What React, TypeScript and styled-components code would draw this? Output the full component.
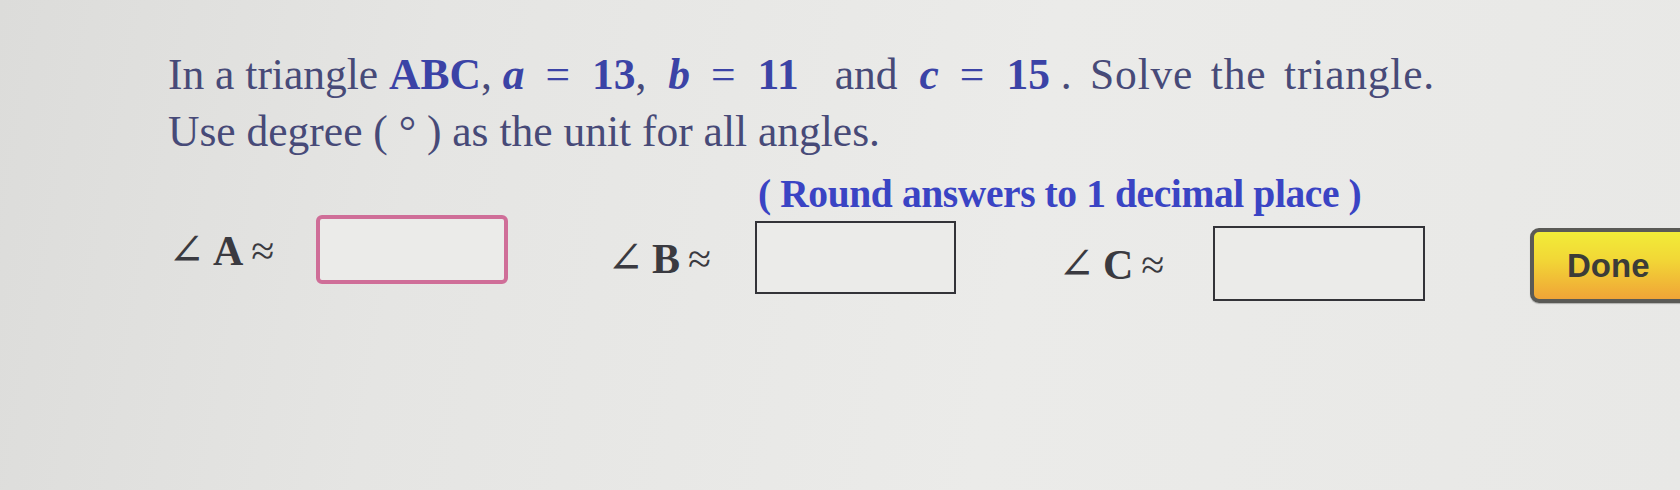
import React from "react";
import styled, { createGlobalStyle } from "styled-components";

const Global = createGlobalStyle`
  html, body { margin: 0; padding: 0; }
  body {
    width: 1680px;
    height: 490px;
    overflow: hidden;
    background: linear-gradient(100deg, #dcdcda 0%, #e5e5e3 25%, #ebebe9 60%, #e8e8e6 100%);
    font-family: "Liberation Serif", "Times New Roman", serif;
  }
`;

const Page = styled.main`
  padding: 46px 0 0 168px;
  display: flex;
  flex-direction: column;
`;

const Question = styled.p`
  margin: 0;
  font-size: 43.5px;
  line-height: 57px;
  color: #474a78;
  white-space: nowrap;
`;

const Math = styled.span<{ $italic?: boolean }>`
  font-weight: bold;
  color: #3b43a6;
  font-style: ${(p) => (p.$italic ? "italic" : "normal")};
`;

const Op = styled.span`
  color: #3b43a6;
  margin: 0 22px 0 21px;
`;

const Space = styled.span<{ $w: number }>`
  display: inline-block;
  width: ${(p) => p.$w}px;
`;

const Tail = styled.span`
  word-spacing: 6px;
  letter-spacing: 0.8px;
`;

const Hint = styled.p`
  margin: 14px 0 0 590px;
  font-size: 39.5px;
  line-height: 40px;
  font-weight: bold;
  color: #3a44c4;
  letter-spacing: -0.4px;
  white-space: nowrap;
`;

const AnswerRow = styled.div`
  display: flex;
  align-items: flex-start;
  margin-top: 1px;
`;

const Field = styled.div<{ $drop: number; $gap: number; $after: number }>`
  display: flex;
  align-items: center;
  gap: ${(p) => p.$gap}px;
  margin-right: ${(p) => p.$after}px;
  margin-top: ${(p) => p.$drop}px;
`;

const Label = styled.span<{ $w: number }>`
  font-size: 42px;
  color: #3a3a40;
  white-space: nowrap;
  display: flex;
  align-items: baseline;
  gap: 8px;
  width: ${(p) => p.$w}px;
`;

const Angle = styled.span`
  font-family: "DejaVu Serif", "Liberation Serif", serif;
  font-size: 44px;
`;

const Letter = styled.span`
  font-weight: bold;
`;

const Box = styled.div<{ $focused?: boolean; $w: number; $h: number }>`
  width: ${(p) => p.$w}px;
  height: ${(p) => p.$h}px;
  box-sizing: border-box;
  background: #ebebe9;
  border: ${(p) => (p.$focused ? "4px solid #cf6e98" : "2.5px solid #333338")};
  border-radius: ${(p) => (p.$focused ? "6px" : "0")};
`;

const DoneButton = styled.button`
  margin-top: 13px;
  width: 162px;
  height: 75px;
  box-sizing: border-box;
  border: 4px solid #5a5a56;
  border-radius: 9px;
  background: linear-gradient(180deg, #f2ec38 0%, #f2d836 40%, #f0a437 100%);
  font-family: "Liberation Sans", Arial, sans-serif;
  font-weight: bold;
  font-size: 33px;
  color: #3c3c38;
  text-align: left;
  padding: 0 0 0 33px;
  flex-shrink: 0;
  box-shadow: 0 1px 1px rgba(0, 0, 0, 0.25);
`;

const fields = [
  { letter: "A", focused: true, lw: 108, w: 192, h: 69, drop: 0, gap: 40, after: 99 },
  { letter: "B", focused: false, lw: 111, w: 201, h: 73, drop: 6, gap: 37, after: 102 },
  { letter: "C", focused: false, lw: 115, w: 212, h: 75, drop: 11, gap: 40, after: 105 },
];

export default function App() {
  return (
    <>
      <Global />
      <Page>
        <Question>
          In a triangle <Math>ABC</Math>, <Math $italic>a</Math>
          <Op>=</Op>
          <Math>13</Math>,<Space $w={22} />
          <Math $italic>b</Math>
          <Op>=</Op>
          <Math>11</Math>
          <Space $w={36} />
          and
          <Space $w={22} />
          <Math $italic>c</Math>
          <Op>=</Op>
          <Math>15</Math> <Tail>. Solve the triangle.</Tail>
          <br />
          Use degree ( ° ) as the unit for all angles.
        </Question>
        <Hint>( Round answers to 1 decimal place )</Hint>
        <AnswerRow>
          {fields.map((f) => (
            <Field key={f.letter} $drop={f.drop} $gap={f.gap} $after={f.after}>
              <Label $w={f.lw}>
                <Angle>∠</Angle>
                <Letter>{f.letter}</Letter>≈
              </Label>
              <Box $focused={f.focused} $w={f.w} $h={f.h} />
            </Field>
          ))}
          <DoneButton>Done</DoneButton>
        </AnswerRow>
      </Page>
    </>
  );
}
